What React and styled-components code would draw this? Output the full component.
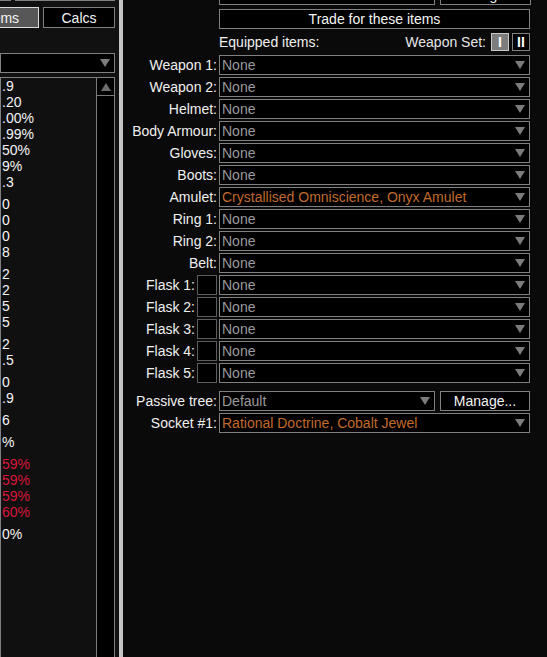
import React from 'react'
import styled, { createGlobalStyle } from 'styled-components'

const GlobalStyle = createGlobalStyle`
  html, body {
    margin: 0;
    padding: 0;
    background: #0a0a0a;
  }
  body {
    font-family: "Liberation Sans", Arial, sans-serif;
    font-size: 14px;
    color: #f0f0f0;
  }
`;

const Page = styled.div`
  display: flex;
  width: 547px;
  height: 657px;
  overflow: hidden;
`;

const LeftPanel = styled.div`
  width: 119px;
  flex: none;
  background: #111;
  display: flex;
  flex-direction: column;
  overflow: hidden;
`;

const Splitter = styled.div`
  width: 4px;
  flex: none;
  background: #c4c4c4;
`;

const Main = styled.div`
  flex: 1;
  background: #0a0a0a;
  display: flex;
  flex-direction: column;
`;

const Strip = styled.div`
  display: flex;
  gap: ${p => p.$gap || 4}px;
  margin-top: ${p => p.$top || 0}px;
  height: ${p => p.$h || 20}px;
  flex: none;
`;

const Box = styled.div`
  box-sizing: border-box;
  width: ${p => p.$w}px;
  height: 100%;
  margin-left: ${p => p.$ml || 0}px;
  flex: none;
  border: 1px solid ${p => (p.$active ? '#dcdcdc' : '#808080')};
  background: ${p => (p.$active ? '#575757' : '#000')};
  color: #f4f4f4;
  display: flex;
  align-items: center;
  justify-content: center;
  white-space: nowrap;
`;

const Select = styled.div`
  box-sizing: border-box;
  width: ${p => p.$w || 311}px;
  height: 20px;
  flex: none;
  border: 1px solid #808080;
  background: #000;
  display: flex;
  align-items: center;
  padding: 0 4px 0 2px;
  color: ${p => (p.$unique ? '#c06a2b' : '#9a9a9a')};
  white-space: nowrap;
`;

const SelectText = styled.span`
  flex: 1;
  overflow: hidden;
`;

const ListBox = styled.div`
  box-sizing: border-box;
  width: 115px;
  flex: 1;
  margin-top: 4px;
  border: 1px solid #808080;
  border-bottom: none;
  display: flex;
`;

const ListBody = styled.div`
  flex: 1;
  background: #101010;
  padding-left: 1px;
  overflow: hidden;
`;

const StatGroup = styled.div`
  margin-bottom: 6px;
`;

const StatLine = styled.div`
  height: 16px;
  line-height: 16px;
  color: ${p => (p.$bad ? '#d8163c' : '#f4f4f4')};
  white-space: nowrap;
`;

const Scrollbar = styled.div`
  width: 17px;
  flex: none;
  border-left: 1px solid #7a7a7a;
  background: #000;
`;

const ScrollUp = styled.div`
  height: 17px;
  border-bottom: 1px solid #7a7a7a;
  display: flex;
  align-items: center;
  justify-content: center;
`;

const Row = styled.div`
  display: flex;
  align-items: center;
  gap: 2px;
  height: ${p => p.$h || 20}px;
  margin-top: ${p => p.$top ?? 2}px;
  flex: none;
`;

const LabelCell = styled.div`
  width: 94px;
  flex: none;
  display: flex;
  justify-content: flex-end;
  align-items: center;
  gap: 2px;
  color: #f0f0f0;
  white-space: nowrap;
`;

const Control = styled.div`
  width: 311px;
  flex: none;
  height: 100%;
  display: flex;
  align-items: center;
  justify-content: ${p => p.$spread ? 'space-between' : 'flex-start'};
  gap: 5px;
`;

const FlaskSlot = styled.div`
  box-sizing: border-box;
  width: 20px;
  height: 20px;
  border: 1px solid #5c5c5c;
  background: #000;
`;

const SetGroup = styled.div`
  display: flex;
  align-items: center;
  gap: 3px;
  color: #e6e6e6;
`;

const SetButton = styled.div`
  box-sizing: border-box;
  width: 18px;
  height: 18px;
  border: 1px solid ${p => (p.$active ? '#c8c8c8' : '#808080')};
  background: ${p => (p.$active ? '#7c7c7c' : '#000')};
  color: #fff;
  font-weight: 700;
  font-size: 14px;
  display: flex;
  align-items: center;
  justify-content: center;
  margin-left: ${p => p.$first ? 2 : 0}px;
`;

const DownArrow = () => (
  <svg width="10" height="8" viewBox="0 0 10 8">
    <polygon points="0,0 10,0 5,8" fill="#7c7c7c" />
  </svg>
);

const UpArrow = () => (
  <svg width="10" height="8" viewBox="0 0 10 8">
    <polygon points="0,8 10,8 5,0" fill="#6e6e6e" />
  </svg>
);

const Dropdown = ({ value, unique, w }) => (
  <Select $unique={unique} $w={w}>
    <SelectText>{value}</SelectText>
    <DownArrow />
  </Select>
);

const statGroups = [
  ['.9', '.20', '.00%', '.99%', '50%', '9%', '.3'],
  ['0', '0', '0', '8'],
  ['2', '2', '5', '5'],
  ['2', '.5'],
  ['0', '.9'],
  ['6'],
  ['%'],
  ['59%', '59%', '59%', '60%'],
  ['0%'],
];

const slots = [
  ['Weapon 1:', 'None'],
  ['Weapon 2:', 'None'],
  ['Helmet:', 'None'],
  ['Body Armour:', 'None'],
  ['Gloves:', 'None'],
  ['Boots:', 'None'],
  ['Amulet:', 'Crystallised Omniscience, Onyx Amulet', true],
  ['Ring 1:', 'None'],
  ['Ring 2:', 'None'],
  ['Belt:', 'None'],
];

const flasks = [1, 2, 3, 4, 5];

export default function App() {
  return (
    <>
      <GlobalStyle />
      <Page>
        <LeftPanel>
          <Strip $top={-19}>
            <Box $w={72} $ml={-61} />
            <Box $w={100} />
          </Strip>
          <Strip $top={6} $h={21}>
            <Box $w={74} $ml={-35} $active>Items</Box>
            <Box $w={72}>Calcs</Box>
          </Strip>
          <Strip $top={25} $h={20}>
            <Select $w={115}>
              <SelectText />
              <DownArrow />
            </Select>
          </Strip>
          <ListBox>
            <ListBody>
              {statGroups.map((group, gi) => (
                <StatGroup key={gi}>
                  {group.map((v, i) => (
                    <StatLine key={i} $bad={gi === 7}>{v}</StatLine>
                  ))}
                </StatGroup>
              ))}
            </ListBody>
            <Scrollbar>
              <ScrollUp>
                <UpArrow />
              </ScrollUp>
            </Scrollbar>
          </ListBox>
        </LeftPanel>
        <Splitter />
        <Main>
          <Row $top={-15}>
            <LabelCell>Item set:</LabelCell>
            <Control>
              <Dropdown value="Default" w={216} />
              <Box $w={91}>Manage...</Box>
            </Control>
          </Row>
          <Row $top={4}>
            <LabelCell />
            <Control>
              <Box $w={311}>Trade for these items</Box>
            </Control>
          </Row>
          <Row $top={4} $h={18}>
            <LabelCell />
            <Control $spread>
              <span>Equipped items:</span>
              <SetGroup>
                Weapon Set:
                <SetButton $active $first>I</SetButton>
                <SetButton>II</SetButton>
              </SetGroup>
            </Control>
          </Row>
          {slots.map(([label, value, unique], i) => (
            <Row key={label} $top={i === 0 ? 4 : 2}>
              <LabelCell>{label}</LabelCell>
              <Control>
                <Dropdown value={value} unique={unique} />
              </Control>
            </Row>
          ))}
          {flasks.map(n => (
            <Row key={n}>
              <LabelCell>
                Flask {n}:
                <FlaskSlot />
              </LabelCell>
              <Control>
                <Dropdown value="None" />
              </Control>
            </Row>
          ))}
          <Row $top={8}>
            <LabelCell>Passive tree:</LabelCell>
            <Control>
              <Dropdown value="Default" w={216} />
              <Box $w={90}>Manage...</Box>
            </Control>
          </Row>
          <Row>
            <LabelCell>Socket #1:</LabelCell>
            <Control>
              <Dropdown value="Rational Doctrine, Cobalt Jewel" unique />
            </Control>
          </Row>
        </Main>
      </Page>
    </>
  )
}
